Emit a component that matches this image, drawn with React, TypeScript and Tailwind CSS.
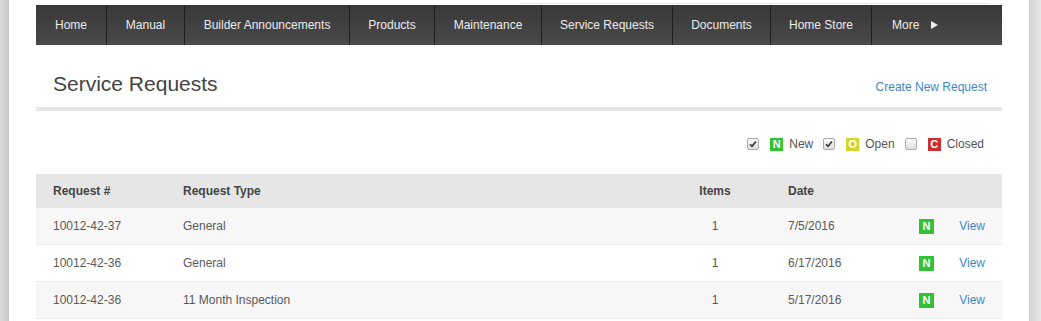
import React from 'react';

const navItems = [
  { label: 'Home', w: 'w-[71px]' },
  { label: 'Manual', w: 'w-[78px]' },
  { label: 'Builder Announcements', w: 'w-[165px]' },
  { label: 'Products', w: 'w-[85px]' },
  { label: 'Maintenance', w: 'w-[107px]' },
  { label: 'Service Requests', w: 'w-[131px]' },
  { label: 'Documents', w: 'w-[98px]' },
  { label: 'Home Store', w: 'w-[101px]' },
];

const requests = [
  { id: '10012-42-37', type: 'General', items: 1, date: '7/5/2016' },
  { id: '10012-42-36', type: 'General', items: 1, date: '6/17/2016' },
  { id: '10012-42-36', type: '11 Month Inspection', items: 1, date: '5/17/2016' },
];

const Checkbox: React.FC<{ checked?: boolean }> = ({ checked }) => (
  <span className="flex h-[12px] w-[12px] items-center justify-center rounded-[2px] border border-[#a9a9a9] bg-gradient-to-b from-[#fafafa] to-[#dedede]">
    {checked && (
      <svg width="8" height="8" viewBox="0 0 8 8">
        <path d="M1 4.2 L3 6.2 L7 1.5" fill="none" stroke="#333" strokeWidth="1.6" />
      </svg>
    )}
  </span>
);

const Badge: React.FC<{ letter: string; color: string; size?: string }> = ({ letter, color, size }) => (
  <span
    className={`flex items-center justify-center text-[11px] font-bold leading-none text-white ${color} ${
      size ?? 'h-[13px] w-[13px]'
    }`}
  >
    {letter}
  </span>
);

const App: React.FC = () => {
  return (
    <div className="flex h-[321px] w-[1041px] overflow-hidden bg-white font-['Liberation_Sans',Arial,sans-serif]">
      <div className="w-[9px] shrink-0 bg-gradient-to-r from-[#dcdcdc] to-[#c4c4c4]" />

      <div className="flex w-[1020px] flex-col">
        <div className="flex h-[5px] justify-end">
          <div className="mr-[39px] mt-[3px] h-px w-[470px] bg-[#e4e4e4]" />
        </div>

        <div className="mx-[27px]">
          {/* top nav */}
          <nav className="flex h-[40px] bg-gradient-to-b from-[#383838] to-[#4a4a4a] text-[12px] text-[#ececec]">
            {navItems.map((item) => (
              <div
                key={item.label}
                className={`flex shrink-0 items-center justify-center whitespace-nowrap border-r border-[#1e1e1e] ${item.w}`}
              >
                {item.label}
              </div>
            ))}
            <div className="flex flex-1 items-center px-[20px]">
              More
              <svg className="ml-[12px]" width="7" height="8" viewBox="0 0 7 8">
                <path d="M0 0 L7 4 L0 8 Z" fill="#ececec" />
              </svg>
            </div>
          </nav>

          {/* heading */}
          <div className="flex h-[66px] items-baseline justify-between border-b-4 border-[#e6e6e6] px-[17px] pt-[27px]">
            <h1 className="text-[21px] leading-[24px] text-[#444]">Service Requests</h1>
            <a className="mr-[-2px] text-[12px] text-[#3f87c9]">Create New Request</a>
          </div>

          {/* filters */}
          <div className="flex h-[63px] items-center justify-end pr-[18px] pt-[3px] text-[12px] text-[#555]">
            <Checkbox checked />
            <span className="ml-[11px]">
              <Badge letter="N" color="bg-[#35c135]" />
            </span>
            <span className="ml-[6px]">New</span>
            <span className="ml-[10px]">
              <Checkbox checked />
            </span>
            <span className="ml-[11px]">
              <Badge letter="O" color="bg-[#d3d32c]" />
            </span>
            <span className="ml-[6px]">Open</span>
            <span className="ml-[10px]">
              <Checkbox />
            </span>
            <span className="ml-[11px]">
              <Badge letter="C" color="bg-[#cc2f2f]" />
            </span>
            <span className="ml-[6px]">Closed</span>
          </div>

          {/* table */}
          <div className="text-[12px]">
            <div className="flex h-[34px] items-center bg-[#e6e6e6] font-bold text-[#444]">
              <div className="w-[147px] pl-[17px]">Request #</div>
              <div className="w-[497px]">Request Type</div>
              <div className="w-[70px] text-center">Items</div>
              <div className="w-[169px] pl-[38px]">Date</div>
            </div>
            {requests.map((r, i) => (
              <div
                key={i}
                className={`flex h-[37px] items-center border-b border-[#ececec] text-[#5a5a5a] ${
                  i % 2 === 0 ? 'bg-[#f7f7f7]' : 'bg-white'
                }`}
              >
                <div className="w-[147px] pl-[17px]">{r.id}</div>
                <div className="w-[497px]">{r.type}</div>
                <div className="w-[70px] text-center">{r.items}</div>
                <div className="w-[169px] pl-[38px]">{r.date}</div>
                <Badge letter="N" color="bg-[#35c135]" size="h-[15px] w-[15px]" />
                <div className="flex-1 pr-[17px] text-right text-[#3f87c9]">View</div>
              </div>
            ))}
          </div>
        </div>
      </div>

      <div className="w-[12px] shrink-0 bg-gradient-to-r from-[#d2d2d2] to-[#e6e6e6]" />
    </div>
  );
};

export default App;
